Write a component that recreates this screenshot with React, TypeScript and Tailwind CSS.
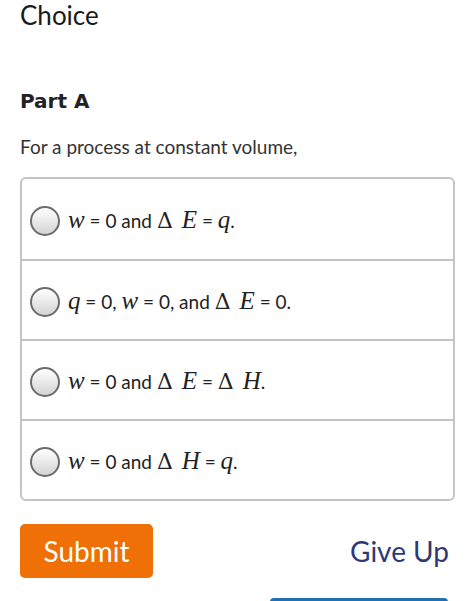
const sans = "font-['Lato','Open_Sans',sans-serif]";

function M({ children }: { children: React.ReactNode }) {
  return (
    <span className="font-['Liberation_Serif','DejaVu_Serif',serif] italic text-[25px] leading-none">
      {children}
    </span>
  );
}

function D() {
  return (
    <span className="font-['DejaVu_Serif','Liberation_Serif',serif] text-[22px] leading-none mr-[9px]">
      Δ
    </span>
  );
}

function Radio() {
  return (
    <span className="mr-[8px] inline-block h-[30px] w-[30px] shrink-0 rounded-full border-2 border-[#6b6b6b] bg-gradient-to-b from-white to-[#d4d4d4]" />
  );
}

const options: React.ReactNode[] = [
  <>
    <M>w</M>&nbsp;= 0 and&nbsp;<D /><M>E</M>&nbsp;=&nbsp;<M>q</M>.
  </>,
  <>
    <M>q</M>&nbsp;= 0,&nbsp;<M>w</M>&nbsp;= 0, and&nbsp;<D /><M>E</M>&nbsp;= 0.
  </>,
  <>
    <M>w</M>&nbsp;= 0 and&nbsp;<D /><M>E</M>&nbsp;=&nbsp;<D /><M>H</M>.
  </>,
  <>
    <M>w</M>&nbsp;= 0 and&nbsp;<D /><M>H</M>&nbsp;=&nbsp;<M>q</M>.
  </>,
];

export default function App() {
  return (
    <div className={`${sans} h-[601px] w-[474px] overflow-hidden bg-white pl-5 pr-[19px] text-[#222]`}>
      <h1 className="text-[26px] leading-[30px] text-[#1a1a1a]">Choice</h1>

      <h2 className="mt-[58px] font-['DejaVu_Sans',sans-serif] text-[20px] font-bold leading-[26px] text-[#222]">
        Part A
      </h2>

      <p className="mt-[20px] text-[19px] leading-[26px] text-[#333]">
        For a process at constant volume,
      </p>

      <div className="mt-[17px] rounded-[6px] border-2 border-[#c4c4c4]">
        {options.map((opt, i) => (
          <div
            key={i}
            className={`flex h-[80px] items-center pl-[8px] pt-[4px] text-[19px] text-[#222] ${
              i > 0 ? "border-t-2 border-[#c4c4c4]" : ""
            }`}
          >
            <Radio />
            <span className="flex items-baseline whitespace-nowrap">{opt}</span>
          </div>
        ))}
      </div>

      <div className="mt-[23px] flex items-center justify-between pr-[6px]">
        <button className="h-[54px] w-[133px] rounded-[5px] bg-[#ee7006] text-[28px] text-white">
          Submit
        </button>
        <a className="text-[28px] text-[#2e3a78]">Give Up</a>
      </div>

      <div className="mt-[20px] flex justify-end pr-[7px]">
        <div className="h-[6px] w-[178px] rounded-t-[4px] bg-[#2070b3]" />
      </div>
    </div>
  );
}
